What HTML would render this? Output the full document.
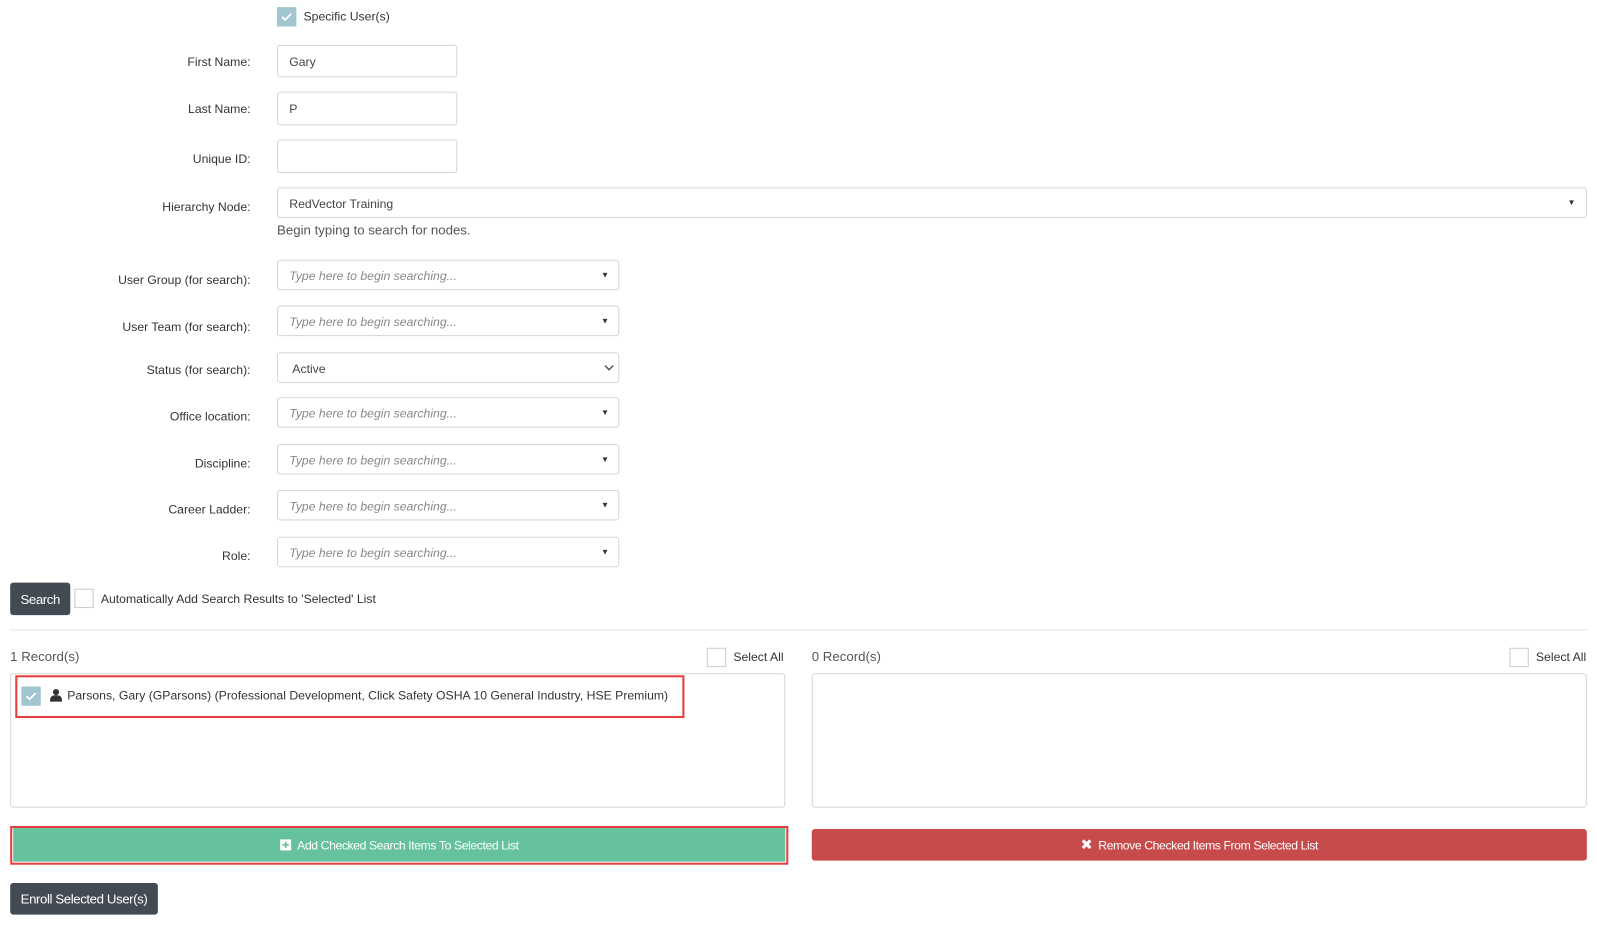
<!DOCTYPE html>
<html><head><meta charset="utf-8"><style>
html,body{margin:0;padding:0;background:#fff;width:1597px;height:925px;overflow:hidden}
#w{position:absolute;left:0;top:0;width:1568px;height:908px;transform:scale(1.0185);transform-origin:0 0;font-family:"Liberation Sans",sans-serif;color:#333}
.a{position:absolute}
.lab{position:absolute;right:1322px;font-size:12px;color:#333;white-space:nowrap;margin-top:1px}
.in{position:absolute;left:272px;border:1px solid #d5d5d5;border-radius:3px;background:#fff;box-sizing:border-box;font-size:12px;color:#444;padding-left:11px;display:flex;align-items:center;padding-top:1px}
.ph{font-style:italic;color:#888}
.arr{position:absolute;right:9px;top:50%;transform:translateY(-50%);font-size:8px;color:#333}
.cb{position:absolute;width:19px;height:19px;border:1px solid #ccc;box-sizing:border-box;background:#fff}
.cbk{position:absolute;width:19px;height:19px;background:#a2c6d0}
.cbk svg{position:absolute;left:4px;top:5px}
.btn{position:absolute;background:#434a54;color:#fff;font-size:13px;border-radius:3px;display:flex;align-items:center;justify-content:center;letter-spacing:-0.4px}
</style></head><body><div id="w">
<div class="cbk" style="left:272px;top:7px"><svg width="11" height="9"><path d="M1 4.5l3 3 6-6" stroke="#fff" stroke-width="1.8" fill="none"/></svg></div>
<div class="a" style="left:298px;top:9px;font-size:12px">Specific User(s)</div>

<div class="lab" style="top:53px">First Name:</div>
<div class="in" style="top:44px;width:177px;height:32px">Gary</div>
<div class="lab" style="top:99px">Last Name:</div>
<div class="in" style="top:90px;width:177px;height:33px">P</div>
<div class="lab" style="top:148px">Unique ID:</div>
<div class="in" style="top:137px;width:177px;height:33px"></div>
<div class="lab" style="top:195px">Hierarchy Node:</div>
<div class="in" style="top:184px;width:1286px;height:30px">RedVector Training<span class="arr" style="right:10px">▼</span></div>
<div class="a" style="left:272px;top:218px;font-size:13px;color:#555">Begin typing to search for nodes.</div>

<div class="lab" style="top:267px">User Group (for search):</div>
<div class="in" style="top:255px;width:336px;height:30px"><span class="ph">Type here to begin searching...</span><span class="arr">▼</span></div>
<div class="lab" style="top:313px">User Team (for search):</div>
<div class="in" style="top:300px;width:336px;height:30px"><span class="ph">Type here to begin searching...</span><span class="arr">▼</span></div>
<div class="lab" style="top:355px">Status (for search):</div>
<div class="in" style="top:346px;width:336px;height:30px;padding-left:14px">Active<svg class="arr" width="10" height="6" style="right:4px"><path d="M1 1l4 4 4-4" stroke="#555" stroke-width="1.5" fill="none"/></svg></div>
<div class="lab" style="top:401px">Office location:</div>
<div class="in" style="top:390px;width:336px;height:30px"><span class="ph">Type here to begin searching...</span><span class="arr">▼</span></div>
<div class="lab" style="top:447px">Discipline:</div>
<div class="in" style="top:436px;width:336px;height:30px"><span class="ph">Type here to begin searching...</span><span class="arr">▼</span></div>
<div class="lab" style="top:492px">Career Ladder:</div>
<div class="in" style="top:481px;width:336px;height:30px"><span class="ph">Type here to begin searching...</span><span class="arr">▼</span></div>
<div class="lab" style="top:538px">Role:</div>
<div class="in" style="top:527px;width:336px;height:30px"><span class="ph">Type here to begin searching...</span><span class="arr">▼</span></div>

<div class="btn" style="left:10px;top:572px;width:59px;height:32px">Search</div>
<div class="cb" style="left:73px;top:578px"></div>
<div class="a" style="left:99px;top:581px;font-size:12px">Automatically Add Search Results to 'Selected' List</div>
<div class="a" style="left:10px;top:618px;width:1548px;height:1px;background:#e5e5e5"></div>

<div class="a" style="left:10px;top:637px;font-size:13px;color:#555">1 Record(s)</div>
<div class="cb" style="left:694px;top:636px"></div>
<div class="a" style="left:720px;top:638px;font-size:12px">Select All</div>
<div class="a" style="left:797px;top:637px;font-size:13px;color:#555">0 Record(s)</div>
<div class="cb" style="left:1482px;top:636px"></div>
<div class="a" style="left:1508px;top:638px;font-size:12px">Select All</div>

<div class="a" style="left:10px;top:661px;width:761px;height:132px;border:1px solid #d5d5d5;border-radius:3px;box-sizing:border-box"></div>
<div class="a" style="left:797px;top:661px;width:761px;height:132px;border:1px solid #d5d5d5;border-radius:3px;box-sizing:border-box"></div>
<div class="a" style="left:15px;top:663px;width:657px;height:42px;border:2px solid #e53e3e;box-sizing:border-box"></div>
<div class="cbk" style="left:21px;top:674px;width:19px;height:19px"><svg width="11" height="9"><path d="M1 4.5l3 3 6-6" stroke="#fff" stroke-width="1.8" fill="none"/></svg></div>
<svg class="a" style="left:49px;top:676px" width="12" height="13"><circle cx="6" cy="3.5" r="3" fill="#333"/><path d="M0 13c0-5 2-6.5 6-6.5s6 1.5 6 6.5z" fill="#333"/></svg>
<div class="a" style="left:66px;top:676px;font-size:12px;letter-spacing:0px">Parsons, Gary (GParsons) (Professional Development, Click Safety OSHA 10 General Industry, HSE Premium)</div>

<div class="a" style="left:10px;top:811px;width:764px;height:38px;border:2px solid #e53e3e;box-sizing:border-box"></div>
<div class="btn" style="left:13px;top:813px;width:758px;height:33px;background:#66c29e;border-radius:0;font-size:12px"><svg width="11" height="11" style="margin-right:6px"><rect width="11" height="11" rx="1" fill="#fff"/><path d="M5.5 2.5v6M2.5 5.5h6" stroke="#66c29e" stroke-width="1.8"/></svg>Add Checked Search Items To Selected List</div>
<div class="btn" style="left:797px;top:814px;width:761px;height:31px;background:#c84b4b;font-size:12px"><span style="font-size:14px;margin-right:6px">✖</span>Remove Checked Items From Selected List</div>

<div class="btn" style="left:10px;top:867px;width:145px;height:31px">Enroll Selected User(s)</div>
</div></body></html>
